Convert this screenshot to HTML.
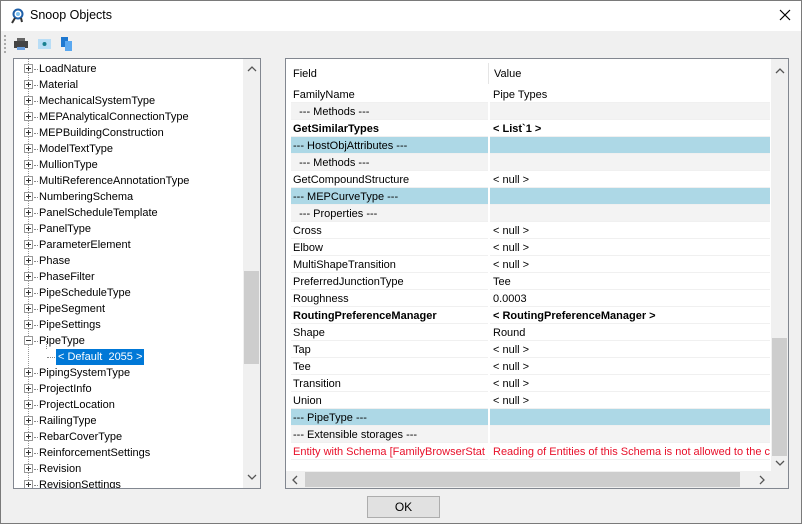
<!DOCTYPE html><html><head><style>
*{margin:0;padding:0;box-sizing:border-box}
body{width:802px;height:524px;background:#f0f0f0;font-family:"Liberation Sans",sans-serif;font-size:11px;color:#000;position:relative;overflow:hidden}
.abs{position:absolute}
#win{left:0;top:0;width:802px;height:524px;border:1px solid #7a7a7a}
#title{left:1px;top:1px;width:800px;height:30px;background:#fff}
#tree{left:13px;top:58px;width:248px;height:431px;background:#fff;border:1px solid #828790;overflow:hidden}
.ti{position:absolute;left:25px;height:16px;line-height:17px;white-space:nowrap}
.pb{position:absolute;left:10px;width:9px;height:9px;border:1px solid #999;background:#fff}
.pb:before{content:"";position:absolute;left:1px;top:3px;width:5px;height:1px;background:#333}
.pb.p:after{content:"";position:absolute;left:3px;top:1px;width:1px;height:5px;background:#333}
.dh{position:absolute;left:20px;width:4px;border-top:1px dotted #888}
#grid{left:285px;top:58px;width:504px;height:431px;background:#fff;border:1px solid #828790;overflow:hidden}
.r{position:absolute;left:5px;width:479px;height:17px;line-height:18px;border-bottom:1px solid #f0f0f0;white-space:nowrap}
.r span{position:absolute;top:0;overflow:hidden}
.r .a{left:2px;width:193px}.r .b{left:202px;width:277px}
.r .d{position:absolute;left:197px;top:0;width:2px;height:17px;background:#fff}
.g{background:#f3f3f3}.bl{background:#add8e6}.bo{font-weight:bold}.red{color:#e8102a}
</style></head><body>
<div id="win" class="abs"></div>
<div id="title" class="abs"></div>
<svg class="abs" style="left:10px;top:8px" width="16" height="16" viewBox="0 0 16 16"><circle cx="8" cy="6" r="4.5" fill="none" stroke="#1e5fa8" stroke-width="2"/><circle cx="8" cy="6" r="2" fill="#7cc0f0"/><path d="M5 10 L2 15 M11 10 L12 14" stroke="#333" stroke-width="2"/></svg>
<div class="abs" style="left:30px;top:8px;font-size:12.5px">Snoop Objects</div>
<svg class="abs" style="left:779px;top:9px" width="12" height="12"><path d="M1 1L11 11M11 1L1 11" stroke="#000" stroke-width="1.2"/></svg>
<div class="abs" style="left:4px;top:35px;height:18px;border-left:2px dotted #aaa"></div>
<svg class="abs" style="left:13px;top:36px" width="62" height="16"><rect x="1" y="5" width="14" height="7" fill="#444"/><rect x="4" y="2" width="8" height="3" fill="#666"/><rect x="4" y="11" width="8" height="3" fill="#6aa0e0"/><rect x="25" y="3" width="13" height="10" fill="#b8ddf6"/><circle cx="31.5" cy="8" r="2" fill="#1a8090"/><rect x="48" y="1" width="7" height="10" fill="#1e78d0"/><rect x="52" y="5" width="7" height="10" fill="#5aa8f0"/></svg>
<div id="tree" class="abs">
<div class="abs" style="left:14px;top:0;height:431px;border-left:1px dotted #999"></div>
<div id="ti"></div>
<div class="abs" style="left:229px;top:0;width:17px;height:431px;background:#f0f0f0"></div>
<div class="abs" style="left:230px;top:212px;width:15px;height:93px;background:#cdcdcd"></div>
<svg class="abs" style="left:233px;top:6px" width="10" height="8"><path d="M1 6L5 2L9 6" stroke="#555" fill="none" stroke-width="1.3"/></svg>
<svg class="abs" style="left:233px;top:414px" width="10" height="8"><path d="M1 2L5 6L9 2" stroke="#555" fill="none" stroke-width="1.3"/></svg>
</div>
<div id="grid" class="abs">
<div class="abs" style="left:5px;top:4px;width:197px;height:21px;line-height:22px;padding-left:2px">Field</div>
<div class="abs" style="left:202px;top:4px;width:280px;height:21px;line-height:22px;padding-left:5px;border-left:1px solid #e5e5e5">Value</div>
<div id="rows"></div>
<div class="abs" style="left:485px;top:0;width:17px;height:412px;background:#f0f0f0"></div>
<div class="abs" style="left:486px;top:279px;width:15px;height:118px;background:#cdcdcd"></div>
<svg class="abs" style="left:489px;top:8px" width="10" height="8"><path d="M1 6L5 2L9 6" stroke="#555" fill="none" stroke-width="1.3"/></svg>
<svg class="abs" style="left:489px;top:400px" width="10" height="8"><path d="M1 2L5 6L9 2" stroke="#555" fill="none" stroke-width="1.3"/></svg>
<div class="abs" style="left:0;top:412px;width:502px;height:17px;background:#f0f0f0"></div>
<div class="abs" style="left:19px;top:413px;width:435px;height:15px;background:#cdcdcd"></div>
<svg class="abs" style="left:5px;top:416px" width="8" height="10"><path d="M6 1L2 5L6 9" stroke="#555" fill="none" stroke-width="1.3"/></svg>
<svg class="abs" style="left:472px;top:416px" width="8" height="10"><path d="M2 1L6 5L2 9" stroke="#555" fill="none" stroke-width="1.3"/></svg>
</div>
<div class="abs" style="left:367px;top:496px;width:73px;height:22px;border:1px solid #adadad;background:#e1e1e1;text-align:center;line-height:20px;font-size:12px">OK</div>
<script>
var t=["LoadNature","Material","MechanicalSystemType","MEPAnalyticalConnectionType","MEPBuildingConstruction","ModelTextType","MullionType","MultiReferenceAnnotationType","NumberingSchema","PanelScheduleTemplate","PanelType","ParameterElement","Phase","PhaseFilter","PipeScheduleType","PipeSegment","PipeSettings","PipeType","*","PipingSystemType","ProjectInfo","ProjectLocation","RailingType","RebarCoverType","ReinforcementSettings","Revision","RevisionSettings"],h="";
t.forEach(function(s,i){var y=2+i*16;if(s=="*"){h+='<div class="abs" style="left:32px;top:'+(y-8)+'px;height:8px;border-left:1px dotted #888"></div><div class="dh" style="left:33px;width:10px;top:'+(y+8)+'px"></div><div class="ti" style="left:42px;top:'+y+'px;background:#0078d7;color:#fff;padding:0 2px">&lt; Default&nbsp; 2055 &gt;</div>';}else{h+='<div class="pb'+(s=="PipeType"?'':' p')+'" style="top:'+(y+3)+'px"></div><div class="dh" style="top:'+(y+8)+'px"></div><div class="ti" style="top:'+y+'px">'+s+'</div>';}});
document.getElementById("ti").outerHTML=h;
var R=[["FamilyName","Pipe Types",""],["&nbsp;&nbsp;--- Methods ---","","g"],["GetSimilarTypes","&lt; List`1 &gt;","bo"],["--- HostObjAttributes ---","","bl"],["&nbsp;&nbsp;--- Methods ---","","g"],["GetCompoundStructure","&lt; null &gt;",""],["--- MEPCurveType ---","","bl"],["&nbsp;&nbsp;--- Properties ---","","g"],["Cross","&lt; null &gt;",""],["Elbow","&lt; null &gt;",""],["MultiShapeTransition","&lt; null &gt;",""],["PreferredJunctionType","Tee",""],["Roughness","0.0003",""],["RoutingPreferenceManager","&lt; RoutingPreferenceManager &gt;","bo"],["Shape","Round",""],["Tap","&lt; null &gt;",""],["Tee","&lt; null &gt;",""],["Transition","&lt; null &gt;",""],["Union","&lt; null &gt;",""],["--- PipeType ---","","bl"],["--- Extensible storages ---","","g"],["Entity with Schema [FamilyBrowserStat...","Reading of Entities of this Schema is not allowed to the cur","red"],["","",""]];
h="";R.forEach(function(r,i){h+='<div class="r '+r[2]+'" style="top:'+(27+i*17)+'px"><span class="a">'+r[0]+'</span><div class="d"></div><span class="b">'+r[1]+'</span></div>';});
document.getElementById("rows").outerHTML=h;
</script>
</body></html>
